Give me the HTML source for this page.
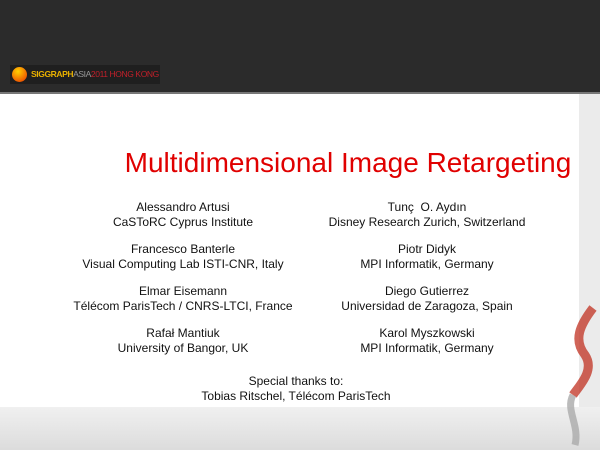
<!DOCTYPE html>
<html><head><style>
body{margin:0;width:600px;height:450px;position:relative;overflow:hidden;background:#fff;font-family:"Liberation Sans",sans-serif;color:#111}
.hdr{position:absolute;left:0;top:0;width:600px;height:92px;background:#2b2b2b}
.hline{position:absolute;left:0;top:92px;width:600px;height:2px;background:#777}
.logo{position:absolute;left:10px;top:65px;width:150px;height:19px;background:#1f1f1f}
.side{position:absolute;left:579px;top:94px;width:21px;height:356px;background:#ebebeb}
.bot{position:absolute;left:0;top:407px;width:600px;height:43px;background:linear-gradient(#f0f0f0,#dcdcdc)}
.t{position:absolute;white-space:nowrap;font-size:12px;transform:translateX(-50%);line-height:15px;text-align:center}
.title{position:absolute;left:348px;top:147px;transform:translateX(-50%);font-size:28px;color:#e00000;white-space:nowrap}
</style></head><body>
<div class="hdr"></div><div class="hline"></div>
<div class="logo">
<div style="position:absolute;left:2px;top:2px;width:15px;height:15px;border-radius:50%;background:radial-gradient(circle at 40% 30%,#ffd000,#e83000)"></div>
<div style="position:absolute;left:21px;top:4px;font-size:8.5px;font-weight:bold;color:#e8b000;letter-spacing:-0.4px;white-space:nowrap">SIGGRAPH<span style="color:#999;font-weight:normal">ASIA</span><span style="color:#c0202a;font-weight:normal">2011 HONG KONG</span></div>
</div>
<div class="side"></div><div class="bot"></div>
<svg style="position:absolute;left:555px;top:300px" width="45" height="150"><path d="M38 8 C25 25 18 40 30 55 C40 70 25 85 18 95" stroke="#c03020" stroke-width="9" fill="none" opacity="0.75"/><path d="M18 95 C10 110 25 125 20 145" stroke="#aaa" stroke-width="7" fill="none" opacity="0.8"/></svg>
<div class="title">Multidimensional Image Retargeting</div>
<div class="t" style="left:183px;top:200px">Alessandro Artusi<br>CaSToRC Cyprus Institute</div>
<div class="t" style="left:427px;top:200px">Tunç&nbsp; O. Aydın<br>Disney Research Zurich, Switzerland</div>
<div class="t" style="left:183px;top:242px">Francesco Banterle<br>Visual Computing Lab ISTI-CNR, Italy</div>
<div class="t" style="left:427px;top:242px">Piotr Didyk<br>MPI Informatik, Germany</div>
<div class="t" style="left:183px;top:284px">Elmar Eisemann<br>Télécom ParisTech / CNRS-LTCI, France</div>
<div class="t" style="left:427px;top:284px">Diego Gutierrez<br>Universidad de Zaragoza, Spain</div>
<div class="t" style="left:183px;top:326px">Rafał Mantiuk<br>University of Bangor, UK</div>
<div class="t" style="left:427px;top:326px">Karol Myszkowski<br>MPI Informatik, Germany</div>
<div class="t" style="left:296px;top:374px">Special thanks to:<br>Tobias Ritschel, Télécom ParisTech</div>
</body></html>
